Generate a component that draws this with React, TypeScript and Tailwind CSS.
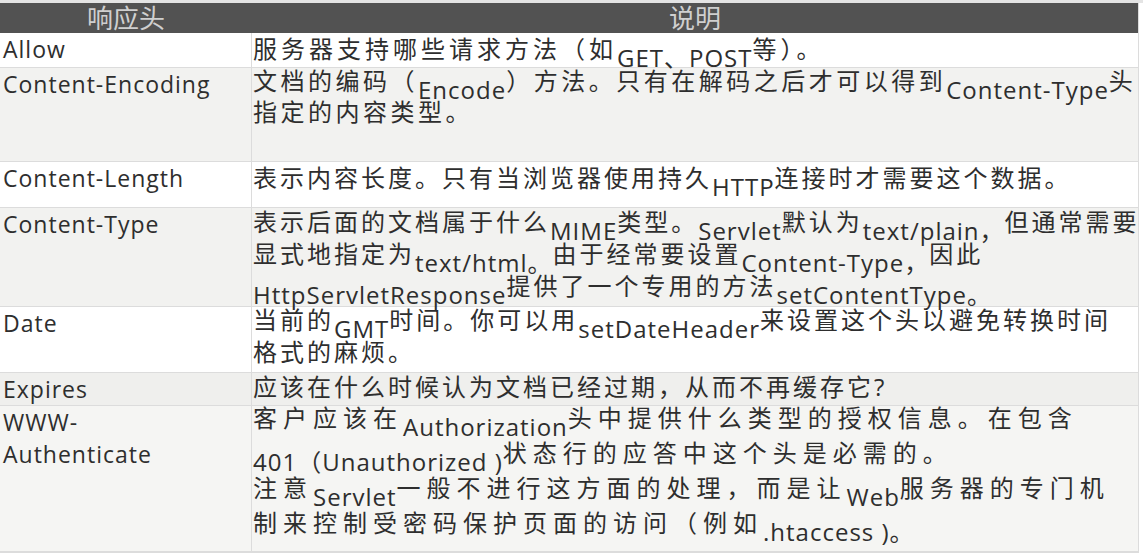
type Seg = string | { en: string };

type Row = {
  name: string[];
  rowClass: string;
  textShift: string;
  lineClass: string;
  lines: Seg[][];
};

const rows: Row[] = [
  {
    name: ["Allow"],
    rowClass: "h-[35px] bg-white",
    textShift: "mt-0",
    lineClass: "h-[32px] tracking-[4px]",
    lines: [["服务器支持哪些请求方法（如", { en: "GET、POST" }, "等）。"]],
  },
  {
    name: ["Content-Encoding"],
    rowClass: "h-[94px] bg-[#f2f2f0]",
    textShift: "-mt-[3px]",
    lineClass: "h-[31px] tracking-[3.5px]",
    lines: [
      ["文档的编码（", { en: "Encode" }, "）方法。只有在解码之后才可以得到", { en: "Content-Type" }, "头"],
      ["指定的内容类型。"],
    ],
  },
  {
    name: ["Content-Length"],
    rowClass: "h-[46px] bg-white",
    textShift: "mt-0",
    lineClass: "h-[32px] tracking-[3px]",
    lines: [["表示内容长度。只有当浏览器使用持久", { en: "HTTP" }, "连接时才需要这个数据。"]],
  },
  {
    name: ["Content-Type"],
    rowClass: "h-[99px] bg-[#f2f2f0]",
    textShift: "-mt-[2px]",
    lineClass: "h-[32px] tracking-[3px]",
    lines: [
      ["表示后面的文档属于什么", { en: "MIME" }, "类型。", { en: "Servlet" }, "默认为", { en: "text/plain，" }, "但通常需要"],
      ["显式地指定为", { en: "text/html。" }, "由于经常要设置", { en: "Content-Type，" }, "因此"],
      [{ en: "HttpServletResponse" }, "提供了一个专用的方法", { en: "setContentType。" }],
    ],
  },
  {
    name: ["Date"],
    rowClass: "h-[66px] bg-white",
    textShift: "-mt-[3px]",
    lineClass: "h-[32px] tracking-[3px]",
    lines: [
      ["当前的", { en: "GMT" }, "时间。你可以用", { en: "setDateHeader" }, "来设置这个头以避免转换时间"],
      ["格式的麻烦。"],
    ],
  },
  {
    name: ["Expires"],
    rowClass: "h-[33px] bg-[#efefed]",
    textShift: "-mt-[2px]",
    lineClass: "h-[32px] tracking-[3px]",
    lines: [["应该在什么时候认为文档已经过期，从而不再缓存它?"]],
  },
  {
    name: ["WWW-", "Authenticate"],
    rowClass: "h-[146px] bg-[#f5f5f3]",
    textShift: "-mt-[4px]",
    lineClass: "h-[35px] tracking-[6px]",
    lines: [
      ["客户应该在", { en: "Authorization" }, "头中提供什么类型的授权信息。在包含"],
      [{ en: "401（Unauthorized )" }, "状态行的应答中这个头是必需的。"],
      ["注意", { en: "Servlet" }, "一般不进行这方面的处理，而是让", { en: "Web" }, "服务器的专门机"],
      ["制来控制受密码保护页面的访问（例如", { en: ".htaccess )。" }],
    ],
  },
];

function Line({ segs, className }: { segs: Seg[]; className: string }) {
  return (
    <div className={`${className} whitespace-nowrap text-[24px] leading-[32px]`}>
      {segs.map((s, i) =>
        typeof s === "string" ? (
          <span key={i}>{s}</span>
        ) : (
          <span key={i} className="align-[-9px] text-[24px] leading-none tracking-[1px]">
            {s.en}
          </span>
        )
      )}
    </div>
  );
}

export default function App() {
  return (
    <div className="h-[557px] w-[1143px] overflow-hidden bg-white font-['Open_Sans','Noto_Sans_CJK_SC',sans-serif] text-[#2e2e2e]">
      <div className="h-[3px] bg-[#e4e4e4]" />
      <div className="w-[1139px] border-r border-b border-[#dcdcdc]">
        <div className="grid h-[30px] grid-cols-[252px_1fr] bg-[#525252] text-[26px] leading-[30px] text-[#cfcfcf]">
          <div className="text-center">响应头</div>
          <div className="text-center">说明</div>
        </div>
        {rows.map((r) => (
          <div key={r.name.join("")} className={`grid grid-cols-[252px_1fr] border-b border-[#dcdcdc] ${r.rowClass}`}>
            <div className="border-r border-[#dcdcdc] pl-[3px] text-[23px] leading-[32px] tracking-[1px]">
              {r.name.map((n) => (
                <div key={n}>{n}</div>
              ))}
            </div>
            <div className={`pl-[1px] ${r.textShift}`}>
              {r.lines.map((l, i) => (
                <Line key={i} segs={l} className={r.lineClass} />
              ))}
            </div>
          </div>
        ))}
      </div>
    </div>
  );
}
